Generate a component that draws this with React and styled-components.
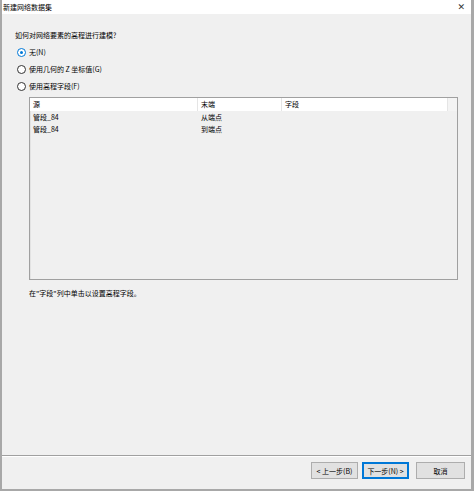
import React from 'react';
import styled, { createGlobalStyle } from 'styled-components';

const GlobalStyle = createGlobalStyle`
    html, body {
        margin: 0;
        padding: 0;
        background: #ffffff;
    }
    body {
        font-family: "Noto Sans CJK SC", "Noto Sans", sans-serif;
        font-size: 7px;
        color: #000;
    }
`;

const Window = styled.div`
    width: 474px;
    height: 491px;
    box-sizing: border-box;
    border-left: 2px solid #a8a8a8;
    border-right: 3px solid #a8a8a8;
    border-bottom: 2px solid #a8a8a8;
    display: flex;
    flex-direction: column;
    background: #f0f0f0;
`;

const TitleBar = styled.div`
    height: 14px;
    flex: none;
    background: #fff;
    display: flex;
    align-items: center;
    justify-content: space-between;
    padding: 0 6px 0 1px;
    line-height: 1;
`;

const CloseGlyph = styled.span`
    font-size: 9px;
    color: #333;
    font-family: "DejaVu Sans", sans-serif;
`;

const Body = styled.div`
    flex: 1;
    display: flex;
    flex-direction: column;
    padding: 16px 13px 0 13px;
`;

const Question = styled.div`
    line-height: 10px;
    margin-bottom: 7px;
`;

const RadioRow = styled.label`
    display: flex;
    align-items: center;
    gap: 3px;
    height: 10px;
    margin-bottom: 7px;
    padding-left: 2px;
`;

const RadioDot = styled.span`
    width: 7px;
    height: 7px;
    border-radius: 50%;
    border: 1px solid ${p => (p.checked ? '#0078d7' : '#333')};
    background: #fff;
    display: flex;
    align-items: center;
    justify-content: center;
    &::after {
        content: '';
        width: 3px;
        height: 3px;
        border-radius: 50%;
        background: ${p => (p.checked ? '#0078d7' : 'transparent')};
    }
`;

const Table = styled.div`
    margin: -1px 0 0 14px;
    height: 181px;
    border: 1px solid #a0a0a0;
    box-shadow: inset 1px 1px 0 #e3e3e3;
    background: #f0f0f0;
    display: flex;
    flex-direction: column;
`;

const HeaderRow = styled.div`
    display: grid;
    grid-template-columns: 168px 84px 166px 1fr;
    height: 13px;
    background: #fff;
`;

const HeaderCell = styled.div`
    padding-left: 3px;
    line-height: 13px;
    border-right: ${p => (p.last ? 'none' : '1px solid #e5e5e5')};
    background: ${p => (p.last ? '#f4f4f4' : '#fff')};
`;

const DataRow = styled.div`
    display: grid;
    grid-template-columns: 168px 84px 166px 1fr;
    height: 12px;
    line-height: 12px;
`;

const Cell = styled.div`
    padding-left: 3px;
`;

const Hint = styled.div`
    margin: 8px 0 0 14px;
    line-height: 10px;
`;

const Footer = styled.div`
    margin-top: auto;
    border-top: 1px solid #a0a0a0;
    box-shadow: inset 0 1px 0 #fff;
    padding: 6px 6px 10px 0;
    display: flex;
    justify-content: flex-end;
    gap: 4px;
`;

const Button = styled.div`
    width: ${p => p.width || 47}px;
    height: 17px;
    box-sizing: border-box;
    border: 1px solid ${p => (p.primary ? '#0078d7' : '#adadad')};
    box-shadow: ${p => (p.primary ? 'inset 0 0 0 1px #0078d7' : 'none')};
    background: #e1e1e1;
    display: flex;
    align-items: center;
    justify-content: center;
    margin-left: ${p => p.gapLeft || 0}px;
`;

const rows = [
    { source: '管段_84', end: '从端点' },
    { source: '管段_84', end: '到端点' },
];

const App = () => {
    return (
        <>
            <GlobalStyle />
            <Window>
                <TitleBar>
                    <span>新建网络数据集</span>
                    <CloseGlyph>✕</CloseGlyph>
                </TitleBar>
                <Body>
                    <Question>如何对网络要素的高程进行建模?</Question>
                    <RadioRow>
                        <RadioDot checked />
                        无(N)
                    </RadioRow>
                    <RadioRow>
                        <RadioDot />
                        使用几何的 Z 坐标值(G)
                    </RadioRow>
                    <RadioRow>
                        <RadioDot />
                        使用高程字段(F)
                    </RadioRow>
                    <Table>
                        <HeaderRow>
                            <HeaderCell>源</HeaderCell>
                            <HeaderCell>末端</HeaderCell>
                            <HeaderCell>字段</HeaderCell>
                            <HeaderCell last />
                        </HeaderRow>
                        {rows.map((row, index) => (
                            <DataRow key={index}>
                                <Cell>{row.source}</Cell>
                                <Cell>{row.end}</Cell>
                                <Cell />
                            </DataRow>
                        ))}
                    </Table>
                    <Hint>在"字段"列中单击以设置高程字段。</Hint>
                </Body>
                <Footer>
                    <Button>&lt; 上一步(B)</Button>
                    <Button primary>下一步(N) &gt;</Button>
                    <Button width={49} gapLeft={3}>取消</Button>
                </Footer>
            </Window>
        </>
    );
};

export default App;
